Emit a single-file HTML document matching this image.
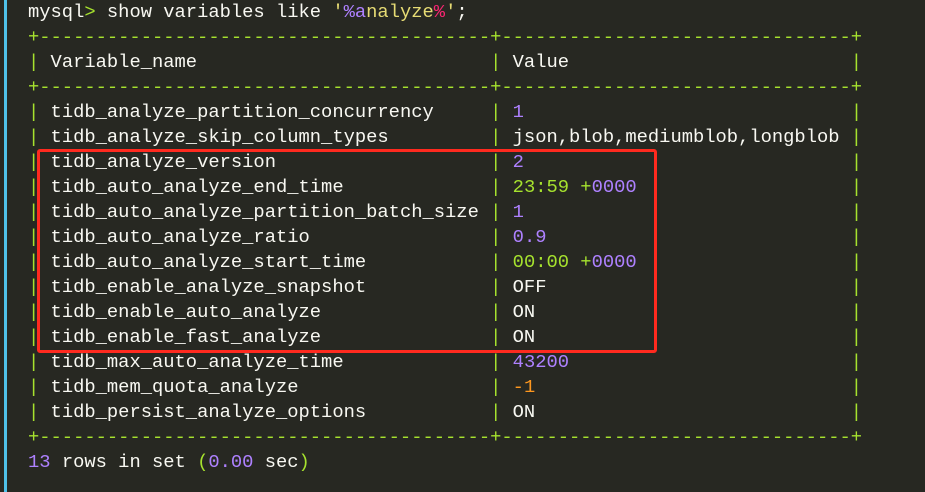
<!DOCTYPE html>
<html><head><meta charset="utf-8"><style>
html,body{margin:0;padding:0;width:925px;height:492px;overflow:hidden;background:#272822;}
.bar{position:absolute;left:4px;top:0;width:3px;height:492px;background:#4fc1e9;}
pre{position:absolute;left:28px;top:0;margin:0;font-family:"Liberation Mono",monospace;font-size:18.8px;line-height:25px;color:#f8f8f2;white-space:pre;}
.g{color:#a6e22e}.p{color:#ae81ff}.y{color:#e6db74}.r{color:#f92672}.o{color:#fd971f}
.box{position:absolute;left:37px;top:149px;width:614px;height:198px;border:3px solid #ff2a1f;border-radius:3px;}
</style></head><body>
<div class="bar"></div>
<pre>mysql<span class="g">&gt;</span> show variables like <span class="y">'</span><span class="p">%a</span><span class="y">nalyze</span><span class="r">%</span><span class="y">'</span>;
<span class="g">+----------------------------------------+-------------------------------+</span>
<span class="g">|</span> Variable_name                          <span class="g">|</span> Value                         <span class="g">|</span>
<span class="g">+----------------------------------------+-------------------------------+</span>
<span class="g">|</span> tidb_analyze_partition_concurrency     <span class="g">|</span> <span class="p">1</span>                             <span class="g">|</span>
<span class="g">|</span> tidb_analyze_skip_column_types         <span class="g">|</span> json,blob,mediumblob,longblob <span class="g">|</span>
<span class="g">|</span> tidb_analyze_version                   <span class="g">|</span> <span class="p">2</span>                             <span class="g">|</span>
<span class="g">|</span> tidb_auto_analyze_end_time             <span class="g">|</span> <span class="g">23:59 +</span><span class="p">0000</span>                   <span class="g">|</span>
<span class="g">|</span> tidb_auto_analyze_partition_batch_size <span class="g">|</span> <span class="p">1</span>                             <span class="g">|</span>
<span class="g">|</span> tidb_auto_analyze_ratio                <span class="g">|</span> <span class="p">0.9</span>                           <span class="g">|</span>
<span class="g">|</span> tidb_auto_analyze_start_time           <span class="g">|</span> <span class="g">00:00 +</span><span class="p">0000</span>                   <span class="g">|</span>
<span class="g">|</span> tidb_enable_analyze_snapshot           <span class="g">|</span> OFF                           <span class="g">|</span>
<span class="g">|</span> tidb_enable_auto_analyze               <span class="g">|</span> ON                            <span class="g">|</span>
<span class="g">|</span> tidb_enable_fast_analyze               <span class="g">|</span> ON                            <span class="g">|</span>
<span class="g">|</span> tidb_max_auto_analyze_time             <span class="g">|</span> <span class="p">43200</span>                         <span class="g">|</span>
<span class="g">|</span> tidb_mem_quota_analyze                 <span class="g">|</span> <span class="o">-1</span>                            <span class="g">|</span>
<span class="g">|</span> tidb_persist_analyze_options           <span class="g">|</span> ON                            <span class="g">|</span>
<span class="g">+----------------------------------------+-------------------------------+</span>
<span class="p">13</span> rows in set <span class="g">(</span><span class="p">0.00</span> sec<span class="g">)</span>
</pre>
<div class="box"></div>
</body></html>
